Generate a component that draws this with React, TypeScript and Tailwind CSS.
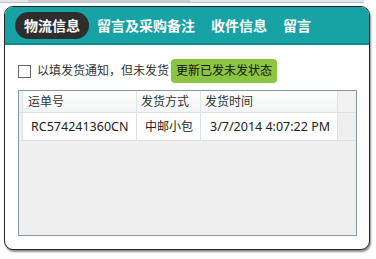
import React from "react";

const tabs = ["物流信息", "留言及采购备注", "收件信息", "留言"];

const rows = [{ no: "RC574241360CN", method: "中邮小包", time: "3/7/2014 4:07:22 PM" }];

export default function App() {
  return (
    <div
      className="w-[376px] h-[259px] bg-white overflow-hidden"
      style={{ fontFamily: '"Noto Sans", "Noto Sans CJK SC", sans-serif' }}
    >
      {/* strip of the window above, cut off */}
      <div className="h-[3px] w-[364px] bg-[#e4e6e9] border-b border-[#b9c4d0] flex">
        <div className="ml-[28px] w-[162px] bg-[#c9ccd0]" />
      </div>

      <div className="ml-[4px] mt-[3px] w-[366px] h-[244px] rounded-[9px] border border-[#262626] bg-white shadow-[1px_2px_2px_rgba(0,0,0,0.45)] overflow-hidden flex flex-col">
        {/* tab bar */}
        <div className="h-[38px] shrink-0 bg-[#17a3a5] border-b-2 border-[#128a8b] flex items-start pt-[5px] pl-[10px]">
          {tabs.map((t, i) => (
            <div
              key={t}
              className={
                i === 0
                  ? "h-[27px] px-[9px] rounded-full bg-[#2e2e2e] text-white text-[14px] font-bold leading-[27px]"
                  : "h-[27px] px-[8px] text-white text-[14px] font-bold leading-[27px]"
              }
            >
              {t}
            </div>
          ))}
        </div>

        <div className="flex-1 flex flex-col pl-[13px] pt-[14px]">
          <div className="flex items-center h-[24px]">
            <div className="w-[13px] h-[13px] border border-[#666] bg-white" />
            <span className="ml-[6px] text-[12px] text-[#333]">以填发货通知，但未发货</span>
            <button className="ml-[2px] h-[24px] px-[5px] rounded-[4px] bg-[#8cc540] text-[12px] text-[#111]">
              更新已发未发状态
            </button>
          </div>

          <div className="mt-[7px] w-[339px] h-[146px] border border-[#8498aa] bg-[#efefef] flex flex-col">
            {/* header */}
            <div className="h-[22px] flex border-b border-[#dde2e6] bg-gradient-to-b from-white to-[#f3f4f5] text-[12px] text-[#333]">
              <div className="w-[4px] border-r border-[#dde2e6] bg-[#f0f0f0]" />
              <div className="w-[114px] border-r border-[#dde2e6] pl-[5px] leading-[22px]">运单号</div>
              <div className="w-[64px] border-r border-[#dde2e6] pl-[4px] leading-[22px]">发货方式</div>
              <div className="w-[137px] border-r border-[#dde2e6] pl-[4px] leading-[22px]">发货时间</div>
              <div className="flex-1 bg-[#f2f2f2]" />
            </div>
            {rows.map((r) => (
              <div key={r.no} className="h-[28px] flex border-b border-[#dde2e6] text-[12.5px] text-[#222]">
                <div className="w-[4px] border-r border-[#dde2e6] bg-[#f0f0f0]" />
                <div className="w-[114px] border-r border-[#dde2e6] bg-white pl-[8px] leading-[27px]">{r.no}</div>
                <div className="w-[64px] border-r border-[#dde2e6] bg-white pl-[8px] leading-[27px] text-[12px]">{r.method}</div>
                <div className="w-[137px] border-r border-[#dde2e6] bg-white pl-[9px] leading-[27px]">{r.time}</div>
                <div className="flex-1" />
              </div>
            ))}
          </div>
        </div>
      </div>
    </div>
  );
}
